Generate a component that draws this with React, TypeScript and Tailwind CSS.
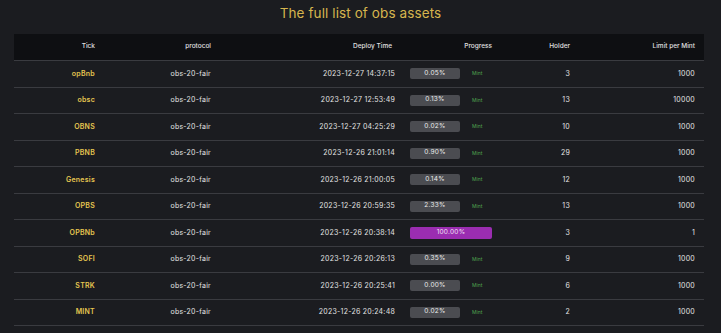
import React from "react";

type Row = {
  tick: string;
  time: string;
  progress: string;
  full?: boolean;
  holder: string;
  limit: string;
};

const rows: Row[] = [
  { tick: "opBnb", time: "2023-12-27 14:37:15", progress: "0.05%", holder: "3", limit: "1000" },
  { tick: "obsc", time: "2023-12-27 12:53:49", progress: "0.13%", holder: "13", limit: "10000" },
  { tick: "OBNS", time: "2023-12-27 04:25:29", progress: "0.02%", holder: "10", limit: "1000" },
  { tick: "PBNB", time: "2023-12-26 21:01:14", progress: "0.90%", holder: "29", limit: "1000" },
  { tick: "Genesis", time: "2023-12-26 21:00:05", progress: "0.14%", holder: "12", limit: "1000" },
  { tick: "OPBS", time: "2023-12-26 20:59:35", progress: "2.33%", holder: "13", limit: "1000" },
  { tick: "OPBNb", time: "2023-12-26 20:38:14", progress: "100.00%", full: true, holder: "3", limit: "1" },
  { tick: "SOFI", time: "2023-12-26 20:26:13", progress: "0.35%", holder: "9", limit: "1000" },
  { tick: "STRK", time: "2023-12-26 20:25:41", progress: "0.00%", holder: "6", limit: "1000" },
  { tick: "MINT", time: "2023-12-26 20:24:48", progress: "0.02%", holder: "2", limit: "1000" },
];

export default function App() {
  return (
    <div
      className="w-[721px] h-[333px] overflow-hidden bg-[#1b1c20] text-[#e6e6e6]"
      style={{ fontFamily: "Inter, 'Liberation Sans', sans-serif" }}
    >
      <div className="h-[34px] flex items-center justify-center">
        <h1 className="text-[13.5px] leading-none text-[#d6b54e] tracking-[0.1px] -mt-[6px]">
          The full list of obs assets
        </h1>
      </div>
      <div className="mx-[14px] w-[690px]">
        <div className="flex h-[26px] items-center bg-[#0e0f12] text-[6.5px] text-[#e0e0e0] font-medium">
          <div className="w-[81px] text-right">Tick</div>
          <div className="w-[116px] text-right">protocol</div>
          <div className="w-[181px] text-right">Deploy Time</div>
          <div className="w-[100px] text-right">Progress</div>
          <div className="w-[78px] text-right">Holder</div>
          <div className="w-[125px] text-right">Limit per Mint</div>
        </div>
        {rows.map((r) => (
          <div
            key={r.tick + r.time}
            className="flex h-[26.5px] items-center border-t border-[#3a3b40] text-[7px] tracking-[0.25px] text-[#e4e4e4]"
          >
            <div className="w-[81px] text-right font-semibold text-[#e6c650]">{r.tick}</div>
            <div className="w-[116px] text-right">obs-20-fair</div>
            <div className="w-[184px] text-right">{r.time}</div>
            <div className="w-[97px] flex items-center pl-[15px]">
              {r.full ? (
                <div className="w-[82px] h-[12px] rounded-[2px] bg-[#9b2db1] flex items-center justify-center text-[6.5px] text-[#f0e0f4]">
                  {r.progress}
                </div>
              ) : (
                <>
                  <div className="w-[50px] h-[11px] rounded-[2px] bg-[#4b4c51] flex items-center justify-center text-[6.5px] text-[#ececec]">
                    {r.progress}
                  </div>
                  <span className="ml-[12px] text-[5px] tracking-normal text-[#4fa34f]">Mint</span>
                </>
              )}
            </div>
            <div className="w-[78px] text-right">{r.holder}</div>
            <div className="w-[125px] text-right">{r.limit}</div>
          </div>
        ))}
        <div className="border-t border-[#3a3b40]" />
      </div>
    </div>
  );
}
